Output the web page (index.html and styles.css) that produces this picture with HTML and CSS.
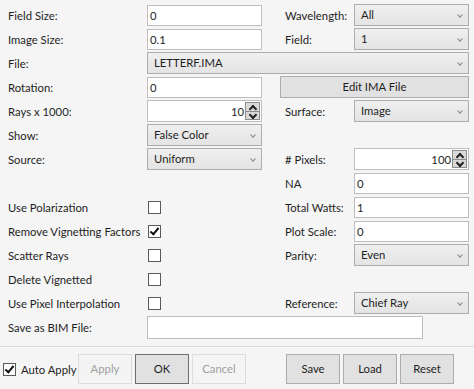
FILE: index.html
```html
<!DOCTYPE html>
<html lang="en">
<head>
    <meta charset="UTF-8">
    <title>Image Simulation Settings</title>
    <link rel="stylesheet" href="styles.css">
</head>
<body>
    <div class="dialog">
        <div class="form">
            <div class="lbl c1">Field Size:</div>
            <div class="text c2">0</div>
            <div class="lbl c4">Wavelength:</div>
            <div class="select c5">All<span class="arrow"></span></div>

            <div class="lbl c1">Image Size:</div>
            <div class="text c2">0.1</div>
            <div class="lbl c4">Field:</div>
            <div class="select c5">1<span class="arrow"></span></div>

            <div class="lbl c1">File:</div>
            <div class="select wide">LETTERF.IMA<span class="arrow"></span></div>

            <div class="lbl c1">Rotation:</div>
            <div class="text c2">0</div>
            <div class="button edit">Edit IMA File</div>

            <div class="lbl c1">Rays x 1000:</div>
            <div class="spin c2"><span class="num">10</span><span class="spin-btn"><span class="up"></span><span class="down"></span></span></div>
            <div class="lbl c4">Surface:</div>
            <div class="select c5">Image<span class="arrow"></span></div>

            <div class="lbl c1">Show:</div>
            <div class="select c2">False Color<span class="arrow"></span></div>

            <div class="lbl c1">Source:</div>
            <div class="select c2">Uniform<span class="arrow"></span></div>
            <div class="lbl c4">&#35; Pixels:</div>
            <div class="spin c5"><span class="num">100</span><span class="spin-btn"><span class="up"></span><span class="down"></span></span></div>

            <div class="lbl c4">NA</div>
            <div class="text c5">0</div>

            <div class="lbl c1">Use Polarization</div>
            <div class="cell c2"><span class="check"></span></div>
            <div class="lbl c4">Total Watts:</div>
            <div class="text c5">1</div>

            <div class="lbl c1">Remove Vignetting Factors</div>
            <div class="cell c2"><span class="check checked"></span></div>
            <div class="lbl c4">Plot Scale:</div>
            <div class="text c5">0</div>

            <div class="lbl c1">Scatter Rays</div>
            <div class="cell c2"><span class="check"></span></div>
            <div class="lbl c4">Parity:</div>
            <div class="select c5">Even<span class="arrow"></span></div>

            <div class="lbl c1">Delete Vignetted</div>
            <div class="cell c2"><span class="check"></span></div>

            <div class="lbl c1">Use Pixel Interpolation</div>
            <div class="cell c2"><span class="check"></span></div>
            <div class="lbl c4">Reference:</div>
            <div class="select c5">Chief Ray<span class="arrow"></span></div>

            <div class="lbl c1">Save as BIM File:</div>
            <div class="text bim"></div>
        </div>

        <div class="footer">
            <span class="check checked"></span>
            <span class="auto">Auto Apply</span>
            <div class="button btn disabled">Apply</div>
            <div class="button btn default">OK</div>
            <div class="button btn disabled">Cancel</div>
            <div class="button btn push">Save</div>
            <div class="button btn">Load</div>
            <div class="button btn">Reset</div>
        </div>
    </div>
</body>
</html>
```

FILE: styles.css
```css
body {
    margin: 0;
    font-family: Lato, "Noto Sans", sans-serif;
    font-size: 11.3px;
    color: #1e1e1e;
    background: #f4f4f4;
}

.dialog {
    width: 474px;
    height: 389px;
    background: #f5f5f5;
}

.form {
    display: grid;
    grid-template-columns: 139px 115px 23px 69px 115px;
    grid-auto-rows: 22px;
    row-gap: 2px;
    padding: 4px 0 0 8px;
    height: 338px;
    box-sizing: border-box;
}

.c1 { grid-column: 1; }
.c2 { grid-column: 2; }
.c4 { grid-column: 4; }
.c5 { grid-column: 5; }

.lbl {
    display: flex;
    align-items: center;
    white-space: nowrap;
}

.text {
    align-self: end;
    height: 21px;
    box-sizing: border-box;
    border: 1px solid #bdbdbd;
    background: #fff;
    padding: 0 2px;
    line-height: 19px;
}

.bim {
    grid-column: 2 / 6;
    margin-right: 46px;
    height: 23px;
    align-self: start;
}

.select {
    position: relative;
    box-sizing: border-box;
    border: 1px solid #adadad;
    background: linear-gradient(#efefef, #e4e4e4);
    padding-left: 6px;
    line-height: 20px;
}

.select.wide {
    grid-column: 2 / 6;
}

.arrow {
    position: absolute;
    right: 6px;
    top: 8px;
    width: 3px;
    height: 3px;
    border-right: 1px solid #888;
    border-bottom: 1px solid #888;
    transform: rotate(45deg);
}

.button {
    box-sizing: border-box;
    border: 1px solid #adadad;
    background: #e1e1e1;
    text-align: center;
}

.edit {
    grid-column: 3 / 6;
    margin-left: 18px;
    line-height: 20px;
}

.spin {
    display: flex;
    align-items: center;
    box-sizing: border-box;
    border: 1px solid #bdbdbd;
    background: #fff;
}

.spin .num {
    flex: 1;
    text-align: right;
    padding-right: 1px;
}

.spin-btn {
    display: flex;
    flex-direction: column;
    width: 15px;
    height: 18px;
    margin-right: 1px;
    border: 1px solid #8c8c8c;
    box-sizing: border-box;
    background: #d9d9d9;
}

.spin-btn span {
    flex: 1;
    position: relative;
}

.spin-btn .up {
    border-bottom: 1px solid #8c8c8c;
}

.spin-btn span::after {
    content: "";
    position: absolute;
    left: 4px;
    width: 4px;
    height: 4px;
    border-left: 2px solid #222;
    border-top: 2px solid #222;
}

.spin-btn .up::after {
    top: 3px;
    transform: rotate(45deg);
}

.spin-btn .down::after {
    top: 0;
    transform: rotate(225deg);
}

.cell {
    display: flex;
    align-items: center;
    padding-left: 1px;
}

.check {
    position: relative;
    display: inline-block;
    flex: none;
    width: 13px;
    height: 13px;
    box-sizing: border-box;
    border: 1px solid #5a5a5a;
    background: #fff;
}

.check.checked::after {
    content: "";
    position: absolute;
    left: 3px;
    top: 0;
    width: 3px;
    height: 7px;
    border-right: 2px solid #111;
    border-bottom: 2px solid #111;
    transform: rotate(40deg);
}

.footer {
    display: flex;
    align-items: center;
    margin-top: 8px;
    border-top: 1px solid #d6dde1;
    padding: 7px 0 0 3px;
    height: 30px;
}

.auto {
    width: 57px;
    margin-left: 5px;
    white-space: nowrap;
}

.btn {
    flex: none;
    width: 54px;
    height: 30px;
    line-height: 28px;
    margin-right: 3px;
}

.btn.disabled {
    background: #f4f4f4;
    border-color: #dcdcdc;
    color: #a0a0a0;
}

.btn.default {
    border-color: #6e6e6e;
}

.btn.push {
    margin-left: 37px;
}
```
